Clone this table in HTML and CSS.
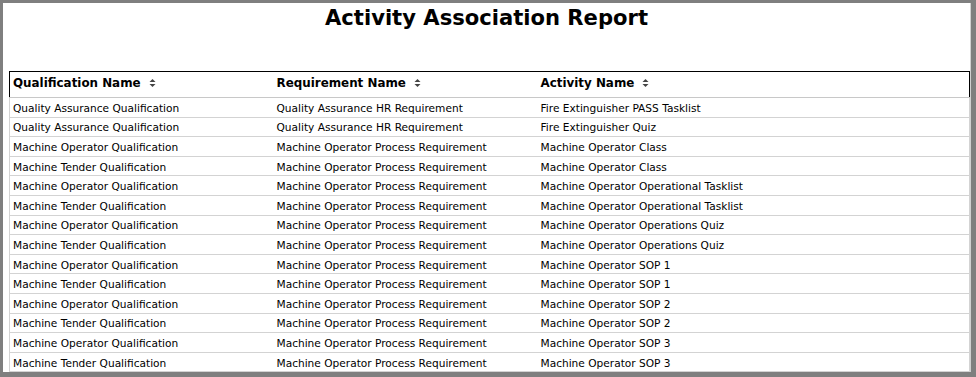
FILE: index.html
```html
<!DOCTYPE html>
<html>
<head>
<meta charset="utf-8">
<link rel="stylesheet" href="styles.css">
</head>
<body>
<div class="frame">
  <h1 class="title">Activity Association Report</h1>
  <table class="report">
    <thead>
      <tr>
        <th>Qualification Name <span class="sort"><svg width="7" height="10" viewBox="0 0 7 10"><path d="M3.5 1 L6.5 4 L0.5 4 Z" fill="#444"/><path d="M3.5 9 L6.5 6 L0.5 6 Z" fill="#444"/></svg></span></th>
        <th>Requirement Name <span class="sort"><svg width="7" height="10" viewBox="0 0 7 10"><path d="M3.5 1 L6.5 4 L0.5 4 Z" fill="#444"/><path d="M3.5 9 L6.5 6 L0.5 6 Z" fill="#444"/></svg></span></th>
        <th>Activity Name <span class="sort"><svg width="7" height="10" viewBox="0 0 7 10"><path d="M3.5 1 L6.5 4 L0.5 4 Z" fill="#444"/><path d="M3.5 9 L6.5 6 L0.5 6 Z" fill="#444"/></svg></span></th>
      </tr>
    </thead>
    <tbody>
      <tr><td>Quality Assurance Qualification</td><td>Quality Assurance HR Requirement</td><td>Fire Extinguisher PASS Tasklist</td></tr>
      <tr><td>Quality Assurance Qualification</td><td>Quality Assurance HR Requirement</td><td>Fire Extinguisher Quiz</td></tr>
      <tr><td>Machine Operator Qualification</td><td>Machine Operator Process Requirement</td><td>Machine Operator Class</td></tr>
      <tr><td>Machine Tender Qualification</td><td>Machine Operator Process Requirement</td><td>Machine Operator Class</td></tr>
      <tr><td>Machine Operator Qualification</td><td>Machine Operator Process Requirement</td><td>Machine Operator Operational Tasklist</td></tr>
      <tr><td>Machine Tender Qualification</td><td>Machine Operator Process Requirement</td><td>Machine Operator Operational Tasklist</td></tr>
      <tr><td>Machine Operator Qualification</td><td>Machine Operator Process Requirement</td><td>Machine Operator Operations Quiz</td></tr>
      <tr><td>Machine Tender Qualification</td><td>Machine Operator Process Requirement</td><td>Machine Operator Operations Quiz</td></tr>
      <tr><td>Machine Operator Qualification</td><td>Machine Operator Process Requirement</td><td>Machine Operator SOP 1</td></tr>
      <tr><td>Machine Tender Qualification</td><td>Machine Operator Process Requirement</td><td>Machine Operator SOP 1</td></tr>
      <tr><td>Machine Operator Qualification</td><td>Machine Operator Process Requirement</td><td>Machine Operator SOP 2</td></tr>
      <tr><td>Machine Tender Qualification</td><td>Machine Operator Process Requirement</td><td>Machine Operator SOP 2</td></tr>
      <tr><td>Machine Operator Qualification</td><td>Machine Operator Process Requirement</td><td>Machine Operator SOP 3</td></tr>
      <tr><td>Machine Tender Qualification</td><td>Machine Operator Process Requirement</td><td>Machine Operator SOP 3</td></tr>
    </tbody>
  </table>
</div>
</body>
</html>
```
FILE: styles.css
```css
html, body {
  margin: 0;
  padding: 0;
  background: #7f7f7f;
}
body {
  width: 976px;
  height: 377px;
  overflow: hidden;
}
.frame {
  box-sizing: border-box;
  margin: 3px 5px 0 3px;
  height: 369px;
  background: #fff;
  border-right: 1px solid #d0d0d0;
  padding: 0 1px 0 6px;
  overflow: hidden;
  font-family: "DejaVu Sans", Verdana, sans-serif;
  color: #000;
}
.title {
  margin: 0;
  height: 68px;
  padding: 2px 5px 0 0;
  box-sizing: border-box;
  text-align: center;
  font-size: 21.1px;
  font-weight: bold;
  line-height: 26px;
}
.report {
  width: 961px;
  border-collapse: collapse;
  table-layout: fixed;
}
.report th {
  box-sizing: border-box;
  width: 264px;
  text-align: left;
  font-size: 11.9px;
  font-weight: bold;
  height: 26px;
  padding: 0 4px 3px 3px;
  border-top: 1px solid #000;
  border-bottom: 1px solid #c8c8c8;
  vertical-align: middle;
  white-space: nowrap;
}
.report th:first-child { border-left: 1px solid #000; }
.report th:last-child { border-right: 1px solid #000; width: auto; }
.sort {
  display: inline-block;
  margin-left: 4px;
  vertical-align: -1px;
}
.sort svg { display: block; }
.report td {
  font-size: 10.6px;
  height: 19.6px;
  padding: 1px 4px 0 3px;
  border-bottom: 1px solid #d3d3d3;
  white-space: nowrap;
  box-sizing: border-box;
}
.report td:first-child { border-left: 1px solid #d3d3d3; }
.report td:last-child { border-right: 1px solid #d3d3d3; }
```
